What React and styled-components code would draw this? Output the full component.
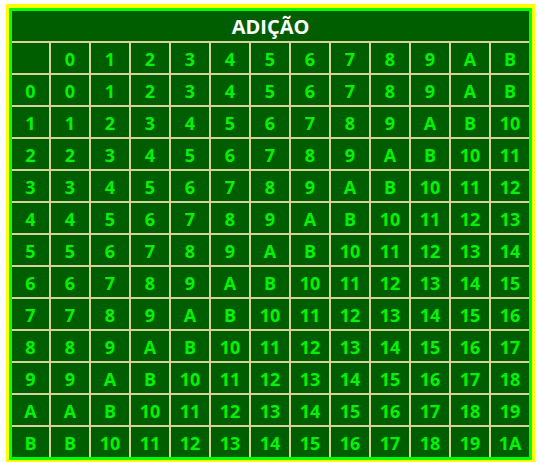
import styled, { createGlobalStyle } from "styled-components";

const GlobalStyle = createGlobalStyle`
  body {
    margin: 0;
    background: #ffffff;
    font-family: "Open Sans", "Liberation Sans", sans-serif;
  }
`;

const DIGITS = "0123456789AB";

const toBase12 = (n) => {
  if (n < 12) return DIGITS[n];
  return DIGITS[Math.floor(n / 12)] + DIGITS[n % 12];
};

const Frame = styled.div`
  display: inline-block;
  margin: 4px 0 0 6px;
  border: 3px solid #ffff00;
  border-top-width: 4px;
`;

const Panel = styled.div`
  display: grid;
  grid-template-columns: 37px repeat(12, 38px);
  grid-auto-rows: 30px;
  gap: 2px;
  background: #d6d3a2;
  border: 3px solid #00ff00;
`;

const Title = styled.div`
  grid-column: 1 / -1;
  display: flex;
  align-items: center;
  justify-content: center;
  background: #005e00;
  color: #ffffff;
  font-size: 20px;
  font-weight: 700;
`;

const Cell = styled.div`
  display: flex;
  align-items: center;
  justify-content: center;
  background: #005e00;
  color: #00f400;
  font-size: 18px;
  font-weight: 700;
  line-height: 1;
  padding-top: 1px;
`;

export default function App() {
  const cells = [<Cell key="corner" />];
  for (let c = 0; c < 12; c++) cells.push(<Cell key={`h${c}`}>{DIGITS[c]}</Cell>);
  for (let r = 0; r < 12; r++) {
    cells.push(<Cell key={`r${r}`}>{DIGITS[r]}</Cell>);
    for (let c = 0; c < 12; c++) {
      cells.push(<Cell key={`${r}-${c}`}>{toBase12(r + c)}</Cell>);
    }
  }

  return (
    <>
      <GlobalStyle />
      <Frame>
        <Panel>
          <Title>ADIÇÃO</Title>
          {cells}
        </Panel>
      </Frame>
    </>
  );
}
